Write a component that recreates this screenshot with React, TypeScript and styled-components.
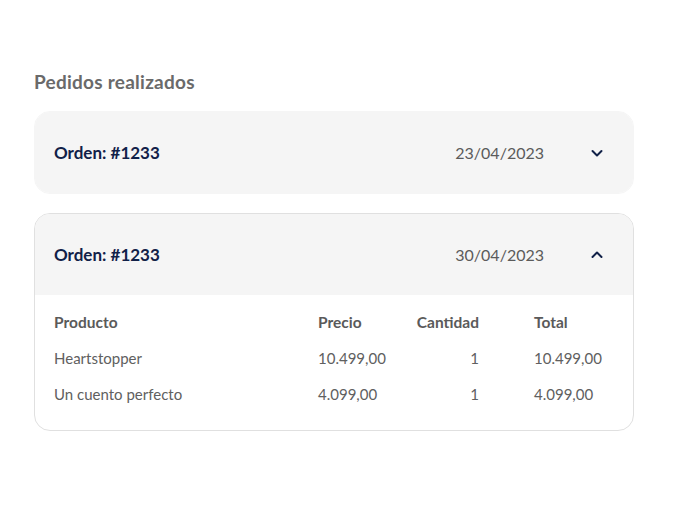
import * as React from 'react';
import styled, { createGlobalStyle } from 'styled-components';

const GlobalStyle = createGlobalStyle`
  body {
    margin: 0;
    background: #ffffff;
    font-family: Lato, "Noto Sans", sans-serif;
  }
`;

const Page = styled.main`
  padding: 70px 64px 0 34px;
`;

const Title = styled.h2`
  margin: 0 0 17px;
  font-size: 19px;
  line-height: 24px;
  font-weight: 700;
  letter-spacing: 0.25px;
  color: #6a6a6a;
`;

const List = styled.div`
  display: flex;
  flex-direction: column;
  gap: 19px;
  width: 600px;
`;

const Card = styled.section<{ $open?: boolean }>`
  border-radius: 16px;
  overflow: hidden;
  background: #ffffff;
  border: 1px solid ${(p) => (p.$open ? '#e0e0e0' : '#f5f5f5')};
`;

const Header = styled.button`
  display: flex;
  align-items: center;
  width: 100%;
  height: 81px;
  padding: 0 29px 0 19px;
  border: 0;
  background: #f5f5f5;
  font-family: inherit;
  cursor: pointer;
  text-align: left;
`;

const OrderId = styled.span`
  flex: 1;
  font-size: 17px;
  font-weight: 700;
  color: #112148;
`;

const OrderDate = styled.span`
  font-size: 16px;
  color: #5b5b5b;
  margin-right: 46px;
`;

const Chevron = styled.svg`
  width: 14px;
  height: 14px;
  color: #112148;
`;

const Table = styled.div`
  display: grid;
  grid-template-columns: 264px 97px 64px 1fr;
  padding: 9px 19px 18px;
`;

const Cell = styled.div<{ $head?: boolean; $right?: boolean; $indent?: boolean }>`
  line-height: 36px;
  font-size: ${(p) => (p.$head ? '15.5px' : '15px')};
  font-weight: ${(p) => (p.$head ? 700 : 400)};
  color: ${(p) => (p.$head ? '#5a5a5a' : '#606060')};
  text-align: ${(p) => (p.$right ? 'right' : 'left')};
  padding-left: ${(p) => (p.$indent ? '55px' : '0')};
  white-space: nowrap;
`;

const items = [
  { name: 'Heartstopper', price: '10.499,00', qty: 1, total: '10.499,00' },
  { name: 'Un cuento perfecto', price: '4.099,00', qty: 1, total: '4.099,00' },
];

const Arrow = ({ up }: { up?: boolean }) => (
  <Chevron viewBox="0 0 14 14" fill="none">
    <polyline
      points={up ? '2.5,9 7,4.5 11.5,9' : '2.5,5 7,9.5 11.5,5'}
      stroke="currentColor"
      strokeWidth="2"
      strokeLinecap="round"
      strokeLinejoin="round"
    />
  </Chevron>
);

const App = () => (
  <React.Fragment>
    <GlobalStyle />
    <Page>
      <Title>Pedidos realizados</Title>
      <List>
        <Card>
          <Header>
            <OrderId>Orden: #1233</OrderId>
            <OrderDate>23/04/2023</OrderDate>
            <Arrow />
          </Header>
        </Card>
        <Card $open>
          <Header>
            <OrderId>Orden: #1233</OrderId>
            <OrderDate>30/04/2023</OrderDate>
            <Arrow up />
          </Header>
          <Table>
            <Cell $head>Producto</Cell>
            <Cell $head>Precio</Cell>
            <Cell $head $right>Cantidad</Cell>
            <Cell $head $indent>Total</Cell>
            {items.map((item) => (
              <React.Fragment key={item.name}>
                <Cell>{item.name}</Cell>
                <Cell>{item.price}</Cell>
                <Cell $right>{item.qty}</Cell>
                <Cell $indent>{item.total}</Cell>
              </React.Fragment>
            ))}
          </Table>
        </Card>
      </List>
    </Page>
  </React.Fragment>
);

export default App;
